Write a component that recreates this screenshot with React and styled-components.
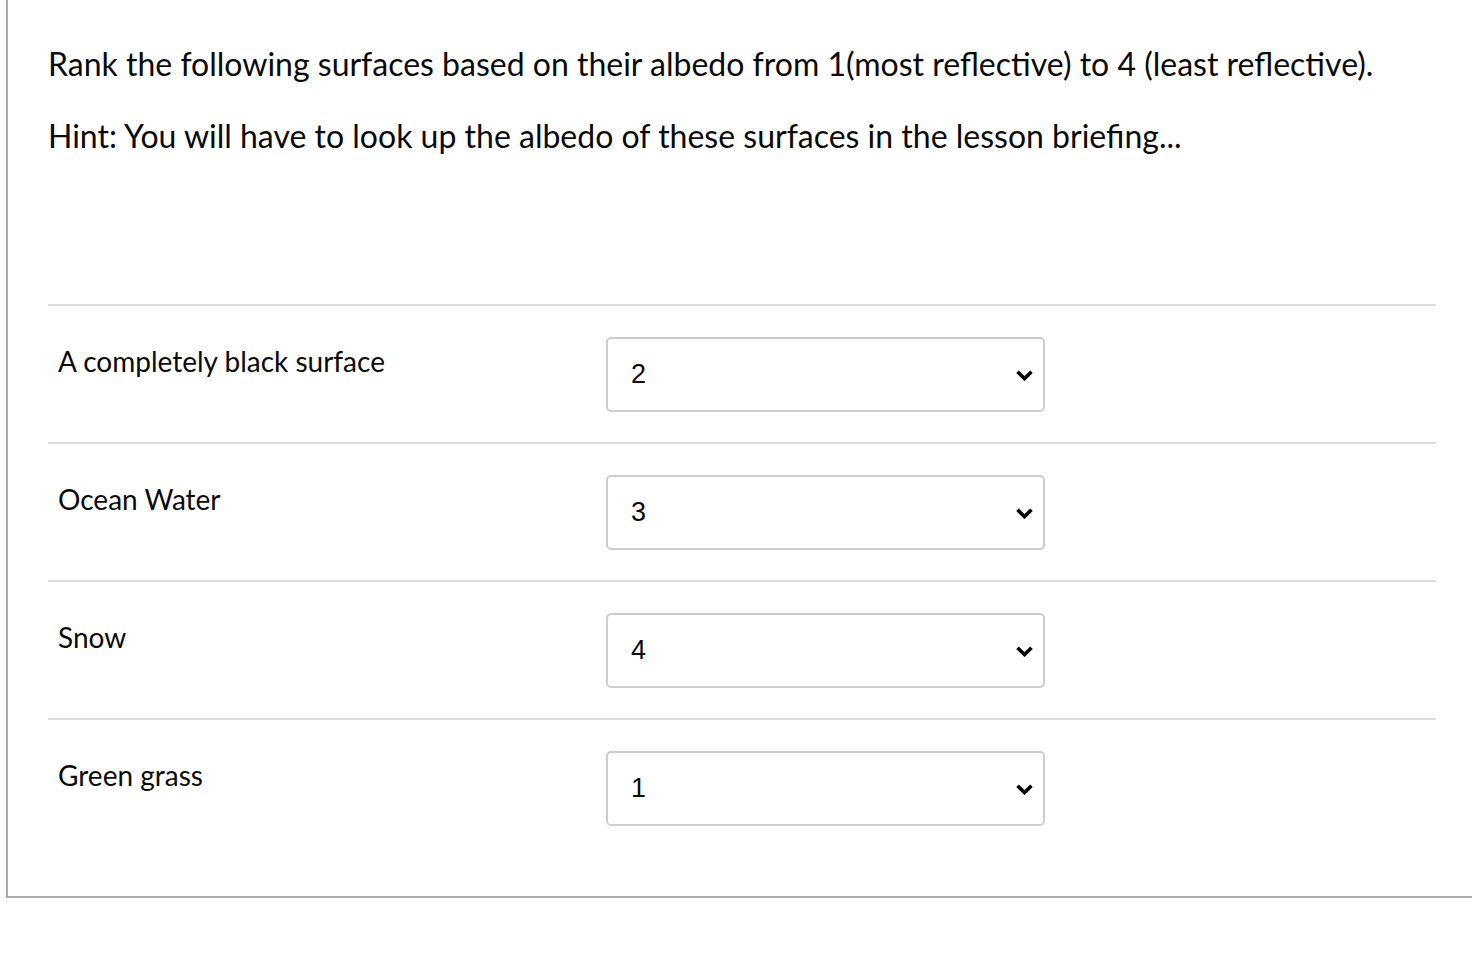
import React from "react";
import styled, { createGlobalStyle } from "styled-components";

const GlobalStyle = createGlobalStyle`
  html, body {
    margin: 0;
    padding: 0;
    background: #ffffff;
  }
  body {
    font-family: Lato, "Open Sans", sans-serif;
    color: #0a0a0a;
  }
`;

const Panel = styled.div`
  margin-left: 6px;
  border-left: 2px solid #aaaaaa;
  border-bottom: 2px solid #aaaaaa;
  padding: 44px 36px 70px 40px;
`;

const Prompt = styled.p`
  margin: 0 0 ${(p) => p.$gap || 0}px;
  font-size: 32px;
  line-height: 40px;
`;

const Matches = styled.div`
  margin-top: 148px;
  display: flex;
  flex-direction: column;
`;

const Row = styled.div`
  display: grid;
  grid-template-columns: 548px 439px;
  align-items: start;
  padding: 31px 0 30px 10px;
  border-top: 2px solid #dddddd;
  &:last-child {
    padding-bottom: 0;
  }
`;

const Label = styled.div`
  font-size: 28px;
  line-height: 36px;
  padding-top: 6px;
`;

const Select = styled.div`
  height: 71px;
  border: 2px solid #cdcdcd;
  border-radius: 5px;
  display: flex;
  align-items: center;
  justify-content: space-between;
  padding: 0 9px 0 23px;
  font-family: "Liberation Sans", Arial, sans-serif;
  font-size: 27px;
  color: #0a0a0a;
`;

const Chevron = () => (
  <svg width="19" height="12" viewBox="0 0 19 12">
    <path d="M2.5 2.8 L9.5 9.6 L16.5 2.8" fill="none" stroke="#000" strokeWidth="3.6" />
  </svg>
);

const rows = [
  ["A completely black surface", "2"],
  ["Ocean Water", "3"],
  ["Snow", "4"],
  ["Green grass", "1"],
];

export default function App() {
  return (
    <>
      <GlobalStyle />
      <Panel>
        <Prompt $gap={32}>
          Rank the following surfaces based on their albedo from 1(most reflective) to 4 (least reflective).
        </Prompt>
        <Prompt>
          Hint: You will have to look up the albedo of these surfaces in the lesson briefing...
        </Prompt>
        <Matches>
          {rows.map(([label, value]) => (
            <Row key={label}>
              <Label>{label}</Label>
              <Select>
                <span>{value}</span>
                <Chevron />
              </Select>
            </Row>
          ))}
        </Matches>
      </Panel>
    </>
  );
}
